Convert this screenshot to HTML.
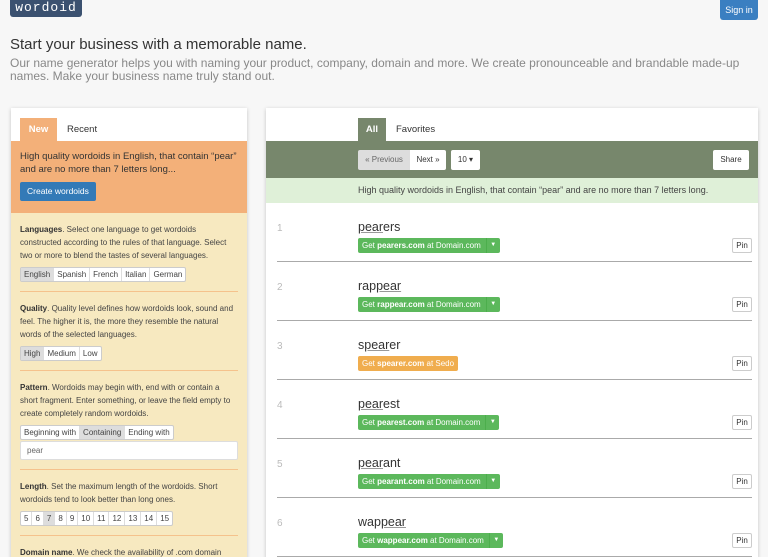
<!DOCTYPE html>
<html><head><style>
*{box-sizing:border-box;margin:0;padding:0}
html,body{width:768px;height:557px;overflow:hidden}
body{background:#f7f7f7;font-family:"Liberation Sans",sans-serif;color:#333;position:relative}
.abs{position:absolute}
.logo{left:10px;top:0;width:72px;height:17px;background:#3b5170;border-radius:0 0 3px 3px;color:#fff;font-size:13px;line-height:15px;text-align:center;letter-spacing:1px;font-family:"Liberation Mono",monospace}
.signin{left:720px;top:0;width:38px;height:20px;background:#3a7fc1;color:#fff;font-size:9px;line-height:20px;text-align:center;border-radius:0 0 3px 3px}
h1{position:absolute;left:10px;top:36px;font-size:15px;font-weight:normal;color:#333}
.intro{left:10px;top:57px;width:750px;font-size:12px;line-height:13px;color:#888}
.lp{left:11px;top:108px;width:236px;height:470px;background:#fff;box-shadow:0 1px 4px rgba(0,0,0,.2)}
.rp{left:266px;top:108px;width:492px;height:470px;background:#fff;box-shadow:0 1px 4px rgba(0,0,0,.2)}
.tab{position:absolute;font-size:9.5px;line-height:23px;height:23px}
.orange{left:0;top:33px;width:236px;height:70px;background:#f3b079;font-size:9.5px;line-height:13px;padding:9px 9px;color:#333}
.btnb{display:inline-block;margin-top:6px;background:#337ab7;color:#fff;font-size:8.5px;padding:0 7px;line-height:19px;border-radius:2px}
.yel{left:0;top:103px;width:236px;height:370px;background:#f7e9c0;border-top:2px solid #f3b079;padding:0 9px;font-size:8px;line-height:13px;color:#444}
.sec{padding:10px 0 9px;border-bottom:1px solid #f5c28c}
.sec b{color:#333}
.grp{display:inline-flex;margin-top:5px;border:1px solid #ccc;border-radius:2px;background:#fff}
.grp span{padding:0 3px;line-height:13px;font-size:8px;border-left:1px solid #ddd}
.grp span:first-child{border-left:0}
.grp .on{background:#ddd}
.inp{margin-top:1px;height:19px;background:#fff;border:1px solid #ddd;border-radius:2px;padding-left:6px;line-height:17px;color:#666}
.gbar{left:0;top:33px;width:492px;height:37px;background:#77876c}
.wb{position:absolute;top:9px;height:20px;background:#fff;font-size:8px;line-height:20px;text-align:center;border-radius:2px;color:#333}
.lg{left:0;top:70px;width:492px;height:25px;background:#dff0d8;font-size:9px;line-height:25px;padding-left:92px;color:#444}
.row{position:absolute;left:11px;width:475px;border-bottom:1px solid #aaa;height:42px}
.num{position:absolute;left:0;top:3px;color:#bbb;font-size:10px}
.nm{position:absolute;left:81px;top:0;font-size:12.5px;line-height:14px;color:#333}
.nm u{text-decoration:underline;text-decoration-color:#999}
.dom{position:absolute;left:81px;top:18px;height:15px;background:#5cb85c;color:#fff;font-size:8px;line-height:15px;padding:0 0 0 4px;border-radius:2px;white-space:nowrap;display:flex}
.dom .c{display:block;height:15px;border-left:1px solid #4cae4c;margin-left:5px;width:14px;text-align:center;font-size:6px;line-height:15px}
.pin{position:absolute;right:0;top:18px;width:20px;height:15px;border:1px solid #ccc;border-radius:2px;font-size:8px;line-height:13px;text-align:center;background:#fff}
</style></head><body>
<div class="abs logo">wordoid</div>
<div class="abs signin">Sign in</div>
<h1>Start your business with a memorable name.</h1>
<div class="abs intro">Our name generator helps you with naming your product, company, domain and more. We create pronounceable and brandable made-up names. Make your business name truly stand out.</div>

<div class="abs lp">
 <div class="tab" style="left:9px;top:10px;width:37px;background:#f3b079;color:#fff;font-weight:bold;text-align:center">New</div>
 <div class="tab" style="left:56px;top:10px">Recent</div>
 <div class="abs orange">High quality wordoids in English, that contain “pear” and are no more than 7 letters long...<br><span class="btnb">Create wordoids</span></div>
 <div class="abs yel">
  <div class="sec"><b>Languages</b>. Select one language to get wordoids constructed according to the rules of that language. Select two or more to blend the tastes of several languages.<br><span class="grp"><span class="on">English</span><span>Spanish</span><span>French</span><span>Italian</span><span>German</span></span></div>
  <div class="sec"><b>Quality</b>. Quality level defines how wordoids look, sound and feel. The higher it is, the more they resemble the natural words of the selected languages.<br><span class="grp"><span class="on">High</span><span>Medium</span><span>Low</span></span></div>
  <div class="sec"><b>Pattern</b>. Wordoids may begin with, end with or contain a short fragment. Enter something, or leave the field empty to create completely random wordoids.<br><span class="grp"><span>Beginning with</span><span class="on">Containing</span><span>Ending with</span></span><div class="inp">pear</div></div>
  <div class="sec"><b>Length</b>. Set the maximum length of the wordoids. Short wordoids tend to look better than long ones.<br><span class="grp"><span>5</span><span>6</span><span class="on">7</span><span>8</span><span>9</span><span>10</span><span>11</span><span>12</span><span>13</span><span>14</span><span>15</span></span></div>
  <div class="sec" style="border:0"><b>Domain name</b>. We check the availability of .com domain</div>
 </div>
</div>

<div class="abs rp">
 <div class="tab" style="left:92px;top:10px;width:28px;background:#77876c;color:#fff;font-weight:bold;text-align:center">All</div>
 <div class="tab" style="left:130px;top:10px">Favorites</div>
 <div class="abs gbar">
  <div class="wb" style="left:92px;width:52px;background:#ddd;color:#666;border-radius:2px 0 0 2px">« Previous</div>
  <div class="wb" style="left:144px;width:36px;border-radius:0 2px 2px 0">Next »</div>
  <div class="wb" style="left:185px;width:29px">10 ▾</div>
  <div class="wb" style="left:447px;width:36px">Share</div>
 </div>
 <div class="abs lg">High quality wordoids in English, that contain “pear” and are no more than 7 letters long.</div>
 <div class="row" style="top:112px"><span class="num">1</span><span class="nm"><u>pear</u>ers</span><span class="dom">Get&nbsp;<b>pearers.com</b>&nbsp;at Domain.com<span class="c">▼</span></span><span class="pin">Pin</span></div>
 <div class="row" style="top:171px"><span class="num">2</span><span class="nm">rap<u>pear</u></span><span class="dom">Get&nbsp;<b>rappear.com</b>&nbsp;at Domain.com<span class="c">▼</span></span><span class="pin">Pin</span></div>
 <div class="row" style="top:230px"><span class="num">3</span><span class="nm">s<u>pear</u>er</span><span class="dom" style="background:#f0ad4e;padding-right:4px">Get&nbsp;<b>spearer.com</b>&nbsp;at Sedo</span><span class="pin">Pin</span></div>
 <div class="row" style="top:289px"><span class="num">4</span><span class="nm"><u>pear</u>est</span><span class="dom">Get&nbsp;<b>pearest.com</b>&nbsp;at Domain.com<span class="c">▼</span></span><span class="pin">Pin</span></div>
 <div class="row" style="top:348px"><span class="num">5</span><span class="nm"><u>pear</u>ant</span><span class="dom">Get&nbsp;<b>pearant.com</b>&nbsp;at Domain.com<span class="c">▼</span></span><span class="pin">Pin</span></div>
 <div class="row" style="top:407px"><span class="num">6</span><span class="nm">wap<u>pear</u></span><span class="dom">Get&nbsp;<b>wappear.com</b>&nbsp;at Domain.com<span class="c">▼</span></span><span class="pin">Pin</span></div>
</div>
</body></html>
